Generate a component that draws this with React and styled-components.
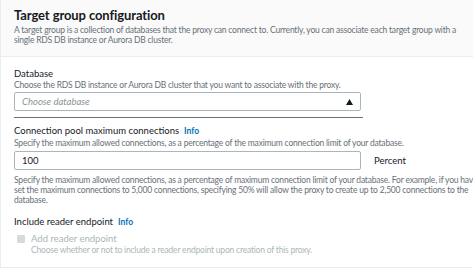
import React from "react";
import styled, { createGlobalStyle } from "styled-components";

const Global = createGlobalStyle`
  html, body { margin: 0; padding: 0; background: #fff; overflow: hidden; }
  body { font-family: Lato, "Open Sans", sans-serif; color: #16191f; }
`;

const Panel = styled.div`
  width: 472px;
  border-left: 1px solid #eaeded;
  background: #fff;
  overflow: hidden;
`;

const Header = styled.div`
  background: #fafafa;
  border-bottom: 1px solid #eaeded;
  padding: 6px 10px 11px 13px;
`;

const Title = styled.h2`
  margin: 0;
  font-size: 13px;
  line-height: 18px;
  font-weight: 700;
  letter-spacing: -0.1px;
  color: #16191f;
`;

const Desc = styled.p`
  margin: ${(p) => p.$mt || 0}px 0 0;
  font-size: 8.5px;
  line-height: 10px;
  letter-spacing: -0.2px;
  color: ${(p) => (p.$faint ? "#aab7b8" : "#687078")};
  width: ${(p) => (p.$wide ? "472px" : "auto")};
`;

const Body = styled.div`
  padding: 10px 0 12px 13px;
  display: flex;
  flex-direction: column;
  border-bottom: 1px solid #eaeded;
  width: 458px;
`;

const Field = styled.div`
  display: flex;
  flex-direction: column;
  margin-top: ${(p) => p.$mt || 0}px;
`;

const Label = styled.div`
  font-size: 9.5px;
  line-height: 13px;
  color: #16191f;
  display: flex;
  align-items: baseline;
  gap: 5px;
`;

const Info = styled.span`
  font-size: 8.5px;
  font-weight: 700;
  color: #0073bb;
`;

const SelectBox = styled.div`
  margin-top: 2px;
  width: 347px;
  height: 19px;
  box-sizing: border-box;
  border: 1px solid #aab7b8;
  border-radius: 2px;
  display: flex;
  align-items: center;
  justify-content: space-between;
  padding: 0 7px 0 7px;
  font-size: 9.5px;
  font-style: italic;
  color: #879596;
`;

const MenuEdge = styled.div`
  width: 349px;
  height: 1px;
  margin-top: 6px;
  background: #687078;
`;

const InputRow = styled.div`
  margin-top: 3px;
  display: flex;
  align-items: center;
  gap: 13px;
`;

const Input = styled.div`
  width: 347px;
  height: 19px;
  box-sizing: border-box;
  border: 1px solid #aab7b8;
  border-radius: 2px;
  display: flex;
  align-items: center;
  padding: 0 7px;
  font-size: 9.5px;
  color: #16191f;
`;

const Unit = styled.span`
  font-size: 9.5px;
  color: #16191f;
`;

const CheckRow = styled.div`
  display: flex;
  align-items: flex-start;
  gap: 6px;
  margin-top: 3px;
  padding-left: 3px;
`;

const Box = styled.span`
  width: 8px;
  height: 8px;
  margin-top: 3px;
  background: #d5dbdb;
  border-radius: 1px;
  flex: none;
`;

const CheckText = styled.div`
  display: flex;
  flex-direction: column;
`;

const CheckLabel = styled.div`
  font-size: 9.5px;
  line-height: 13px;
  color: #aab7b8;
`;

export default function App() {
  return (
    <>
      <Global />
      <Panel>
        <Header>
          <Title>Target group configuration</Title>
          <Desc $mt={1}>
            A target group is a collection of databases that the proxy can connect to. Currently, you can associate each target group with a single RDS DB instance or Aurora DB cluster.
          </Desc>
        </Header>
        <Body>
          <Field>
            <Label>Database</Label>
            <Desc>Choose the RDS DB instance or Aurora DB cluster that you want to associate with the proxy.</Desc>
            <SelectBox>
              <span>Choose database</span>
              <svg width="7" height="6" viewBox="0 0 7 6">
                <path d="M0 6 L3.5 0 L7 6 Z" fill="#16191f" />
              </svg>
            </SelectBox>
            <MenuEdge />
          </Field>
          <Field $mt={6}>
            <Label>
              Connection pool maximum connections <Info>Info</Info>
            </Label>
            <Desc>Specify the maximum allowed connections, as a percentage of the maximum connection limit of your database.</Desc>
            <InputRow>
              <Input>100</Input>
              <Unit>Percent</Unit>
            </InputRow>
            <Desc $mt={5} $wide>
              Specify the maximum allowed connections, as a percentage of maximum connection limit of your database. For example, if you have set the maximum connections to 5,000 connections, specifying 50% will allow the proxy to create up to 2,500 connections to the database.
            </Desc>
          </Field>
          <Field $mt={10}>
            <Label>
              Include reader endpoint <Info>Info</Info>
            </Label>
            <CheckRow>
              <Box />
              <CheckText>
                <CheckLabel>Add reader endpoint</CheckLabel>
                <Desc $faint>Choose whether or not to include a reader endpoint upon creation of this proxy.</Desc>
              </CheckText>
            </CheckRow>
          </Field>
        </Body>
      </Panel>
    </>
  );
}
